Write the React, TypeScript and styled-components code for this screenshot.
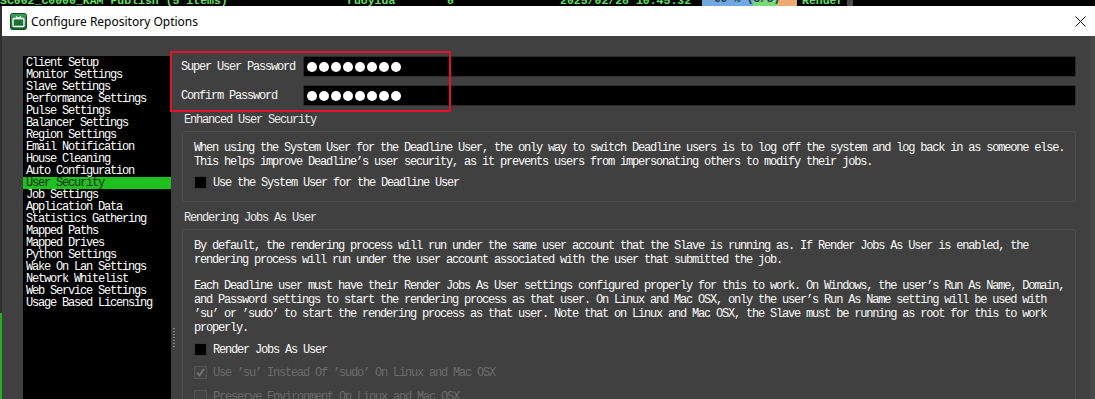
import styled, { createGlobalStyle } from 'styled-components';

const GlobalStyle = createGlobalStyle`
  html, body {
    margin: 0;
    padding: 0;
    background: #000;
  }
  * {
    box-sizing: border-box;
  }
`;

const mono = `"Liberation Mono", "DejaVu Sans Mono", monospace`;

const Screen = styled.div`
  position: relative;
  width: 1095px;
  height: 399px;
  overflow: hidden;
  display: flex;
  flex-direction: column;
  background: #000;
`;

const BackStrip = styled.div`
  height: 6px;
  overflow: hidden;
  display: flex;
  align-items: flex-end;
`;

const BackRow = styled.div`
  display: flex;
  align-items: center;
  height: 14px;
  margin-bottom: -1px;
  flex-shrink: 0;
  font-family: ${mono};
  font-weight: bold;
  font-size: 11.5px;
  color: #63e463;
  white-space: pre;
`;

const BackCell = styled.div<{ $w: number }>`
  width: ${(p) => p.$w}px;
  flex-shrink: 0;
`;

const Progress = styled.div`
  height: 14px;
  width: 95px;
  flex-shrink: 0;
  margin-right: 5px;
  padding-left: 12px;
  font-size: 11px;
  color: #1e3550;
  background: linear-gradient(
    to right,
    #6fa9e0 0,
    #6fa9e0 51px,
    #79d879 51px,
    #79d879 76px,
    #efaa72 76px,
    #efaa72 100%
  );
`;

const GreyBox = styled.div`
  width: 6px;
  height: 14px;
  margin-left: 5px;
  background: #4a4a4a;
`;

const MainRow = styled.div`
  flex: 1;
  display: flex;
  min-height: 0;
`;

const LeftEdge = styled.div`
  width: 2px;
  flex-shrink: 0;
  background: linear-gradient(
    to bottom,
    #2e2e2e 0,
    #2e2e2e 307px,
    #22b022 307px,
    #22b022 100%
  );
`;

const Dialog = styled.div`
  flex: 1;
  display: flex;
  flex-direction: column;
  min-width: 0;
`;

const TitleBar = styled.div`
  height: 30px;
  flex-shrink: 0;
  display: flex;
  align-items: center;
  padding: 0 9px 0 8px;
  background: #fff;
`;

const TitleText = styled.div`
  flex: 1;
  margin-left: 4px;
  font-family: "Noto Sans", "Open Sans", sans-serif;
  font-size: 12px;
  color: #000;
`;

const Body = styled.div`
  flex: 1;
  display: flex;
  padding: 20px 0 0 21px;
  background: #404040;
  position: relative;
`;

const RightStrip = styled.div`
  width: 5px;
  flex-shrink: 0;
  background: #474747;
  margin-top: -20px;
`;

const List = styled.div`
  width: 148px;
  flex-shrink: 0;
  background: #000;
  padding-top: 1px;
  font-family: ${mono};
  font-size: 12px;
  letter-spacing: -1.2px;
  color: #fff;
`;

const ListItem = styled.div<{ $selected?: boolean }>`
  height: 12px;
  line-height: 12px;
  padding-left: 3px;
  white-space: pre;
  background: ${(p) => (p.$selected ? '#20c020' : 'transparent')};
  color: ${(p) => (p.$selected ? '#0d2a0d' : '#fff')};
`;

const Splitter = styled.div`
  width: 9px;
  flex-shrink: 0;
  padding: 272px 0 0 2px;
`;

const Handle = styled.div`
  width: 2px;
  height: 19px;
  background: repeating-linear-gradient(
    to bottom,
    #8a8a8a 0,
    #8a8a8a 1px,
    transparent 1px,
    transparent 3px
  );
`;

const Content = styled.div`
  width: 896px;
  flex-shrink: 0;
  display: flex;
  flex-direction: column;
  font-family: ${mono};
  font-size: 12px;
  letter-spacing: -1.2px;
  color: #fafafa;
`;

const FieldRow = styled.div<{ $top: number }>`
  display: flex;
  align-items: center;
  height: 21px;
  margin-top: ${(p) => p.$top}px;
`;

const FieldLabel = styled.div`
  width: 123px;
  padding-left: 1px;
  white-space: pre;
`;

const PasswordBox = styled.div`
  flex: 1;
  height: 21px;
  display: flex;
  align-items: center;
  gap: 2px;
  padding-left: 3px;
  background: #000;
  border: 1px solid #2c2c2c;
  border-radius: 2px;
`;

const Dot = styled.span`
  width: 10px;
  height: 10px;
  border-radius: 50%;
  background: #fff;
`;

const SectionTitle = styled.div<{ $top: number }>`
  margin-top: ${(p) => p.$top}px;
  padding-left: 4px;
  height: 12px;
  line-height: 12px;
  white-space: pre;
  color: #ececec;
`;

const Group = styled.div<{ $pb: number }>`
  margin: 5px 0 0 2px;
  padding: 9px 11px ${(p) => p.$pb}px;
  border: 1px solid #4d4d4d;
  border-radius: 2px;
`;

const Para = styled.div<{ $top?: number }>`
  margin-top: ${(p) => p.$top ?? 0}px;
`;

const Line = styled.div`
  height: 14px;
  line-height: 14px;
  white-space: pre;
`;

const CheckRow = styled.div<{ $top: number; $disabled?: boolean }>`
  display: flex;
  align-items: center;
  gap: 6px;
  height: 13px;
  margin-top: ${(p) => p.$top}px;
  white-space: pre;
  color: ${(p) => (p.$disabled ? '#6c6c6c' : '#fafafa')};
`;

const Box = styled.div<{ $disabled?: boolean }>`
  width: 13px;
  height: 13px;
  flex-shrink: 0;
  display: flex;
  align-items: center;
  justify-content: center;
  background: ${(p) => (p.$disabled ? '#434343' : '#000')};
  border: 1px solid ${(p) => (p.$disabled ? '#565656' : '#3a3a3a')};
`;

const Annotation = styled.div`
  position: absolute;
  left: 170px;
  top: 51px;
  width: 281px;
  height: 61px;
  border: 2px solid #e8112d;
  pointer-events: none;
`;

const AppIcon = () => (
  <svg width="17" height="17" viewBox="0 0 17 17">
    <defs>
      <linearGradient id="ig" x1="0" y1="0" x2="0" y2="1">
        <stop offset="0" stopColor="#3fa35a" />
        <stop offset="1" stopColor="#17612c" />
      </linearGradient>
    </defs>
    <rect x="0.5" y="0.5" width="16" height="16" rx="2" fill="url(#ig)" stroke="#0f4a20" />
    <path d="M6 3.5 L8.5 5.5 L11 3.5" stroke="#fff" strokeWidth="1.1" fill="none" />
    <rect x="3" y="5.5" width="11" height="8" rx="1" fill="none" stroke="#fff" strokeWidth="1.3" />
    <rect x="4.5" y="7" width="8" height="5" fill="#1e6e35" />
  </svg>
);

const CloseIcon = () => (
  <svg width="11" height="11" viewBox="0 0 11 11">
    <path d="M0.5 0.5 L10.5 10.5 M10.5 0.5 L0.5 10.5" stroke="#111" strokeWidth="1" />
  </svg>
);

const CheckMark = () => (
  <svg width="11" height="11" viewBox="0 0 11 11">
    <path d="M2 5.5 L4.5 8.5 L9 2" stroke="#7a7a7a" strokeWidth="1.6" fill="none" />
  </svg>
);

const pages = [
  'Client Setup',
  'Monitor Settings',
  'Slave Settings',
  'Performance Settings',
  'Pulse Settings',
  'Balancer Settings',
  'Region Settings',
  'Email Notification',
  'House Cleaning',
  'Auto Configuration',
  'User Security',
  'Job Settings',
  'Application Data',
  'Statistics Gathering',
  'Mapped Paths',
  'Mapped Drives',
  'Python Settings',
  'Wake On Lan Settings',
  'Network Whitelist',
  'Web Service Settings',
  'Usage Based Licensing',
];

const enhancedText = [
  'When using the System User for the Deadline User, the only way to switch Deadline users is to log off the system and log back in as someone else.',
  'This helps improve Deadline’s user security, as it prevents users from impersonating others to modify their jobs.',
];

const renderText1 = [
  'By default, the rendering process will run under the same user account that the Slave is running as. If Render Jobs As User is enabled, the',
  'rendering process will run under the user account associated with the user that submitted the job.',
];

const renderText2 = [
  'Each Deadline user must have their Render Jobs As User settings configured properly for this to work. On Windows, the user’s Run As Name, Domain,',
  'and Password settings to start the rendering process as that user. On Linux and Mac OSX, only the user’s Run As Name setting will be used with',
  '’su’ or ’sudo’ to start the rendering process as that user. Note that on Linux and Mac OSX, the Slave must be running as root for this to work',
  'properly.',
];

const Dots = () => (
  <PasswordBox>
    {Array.from({ length: 8 }).map((_, i) => (
      <Dot key={i} />
    ))}
  </PasswordBox>
);

export default function App() {
  return (
    <>
      <GlobalStyle />
      <Screen>
        <BackStrip>
          <BackRow>
            <BackCell $w={347}>SC002_C0000_KAM Publish (5 items)</BackCell>
            <BackCell $w={100}>ruoyida</BackCell>
            <BackCell $w={113}>8</BackCell>
            <BackCell $w={142}>2025/02/28 10:45:32</BackCell>
            <Progress>60 % (3/5)</Progress>
            <BackCell $w={40}>Render</BackCell>
            <GreyBox />
          </BackRow>
        </BackStrip>
        <MainRow>
          <LeftEdge />
          <Dialog>
            <TitleBar>
              <AppIcon />
              <TitleText>Configure Repository Options</TitleText>
              <CloseIcon />
            </TitleBar>
            <Body>
              <List>
                {pages.map((p) => (
                  <ListItem key={p} $selected={p === 'User Security'}>
                    {p}
                  </ListItem>
                ))}
              </List>
              <Splitter>
                <Handle />
              </Splitter>
              <Content>
                <FieldRow $top={0}>
                  <FieldLabel>Super User Password</FieldLabel>
                  <Dots />
                </FieldRow>
                <FieldRow $top={8}>
                  <FieldLabel>Confirm Password</FieldLabel>
                  <Dots />
                </FieldRow>

                <SectionTitle $top={8}>Enhanced User Security</SectionTitle>
                <Group $pb={12}>
                  <Para>
                    {enhancedText.map((l) => (
                      <Line key={l}>{l}</Line>
                    ))}
                  </Para>
                  <CheckRow $top={7}>
                    <Box />
                    Use the System User for the Deadline User
                  </CheckRow>
                </Group>

                <SectionTitle $top={10}>Rendering Jobs As User</SectionTitle>
                <Group $pb={12}>
                  <Para>
                    {renderText1.map((l) => (
                      <Line key={l}>{l}</Line>
                    ))}
                  </Para>
                  <Para $top={12}>
                    {renderText2.map((l) => (
                      <Line key={l}>{l}</Line>
                    ))}
                  </Para>
                  <CheckRow $top={8}>
                    <Box />
                    Render Jobs As User
                  </CheckRow>
                  <CheckRow $top={10} $disabled>
                    <Box $disabled>
                      <CheckMark />
                    </Box>
                    Use ’su’ Instead Of ’sudo’ On Linux and Mac OSX
                  </CheckRow>
                  <CheckRow $top={11} $disabled>
                    <Box $disabled />
                    Preserve Environment On Linux and Mac OSX
                  </CheckRow>
                </Group>
              </Content>
              <div style={{ flex: 1 }} />
              <RightStrip />
            </Body>
          </Dialog>
        </MainRow>
        <Annotation />
      </Screen>
    </>
  );
}
